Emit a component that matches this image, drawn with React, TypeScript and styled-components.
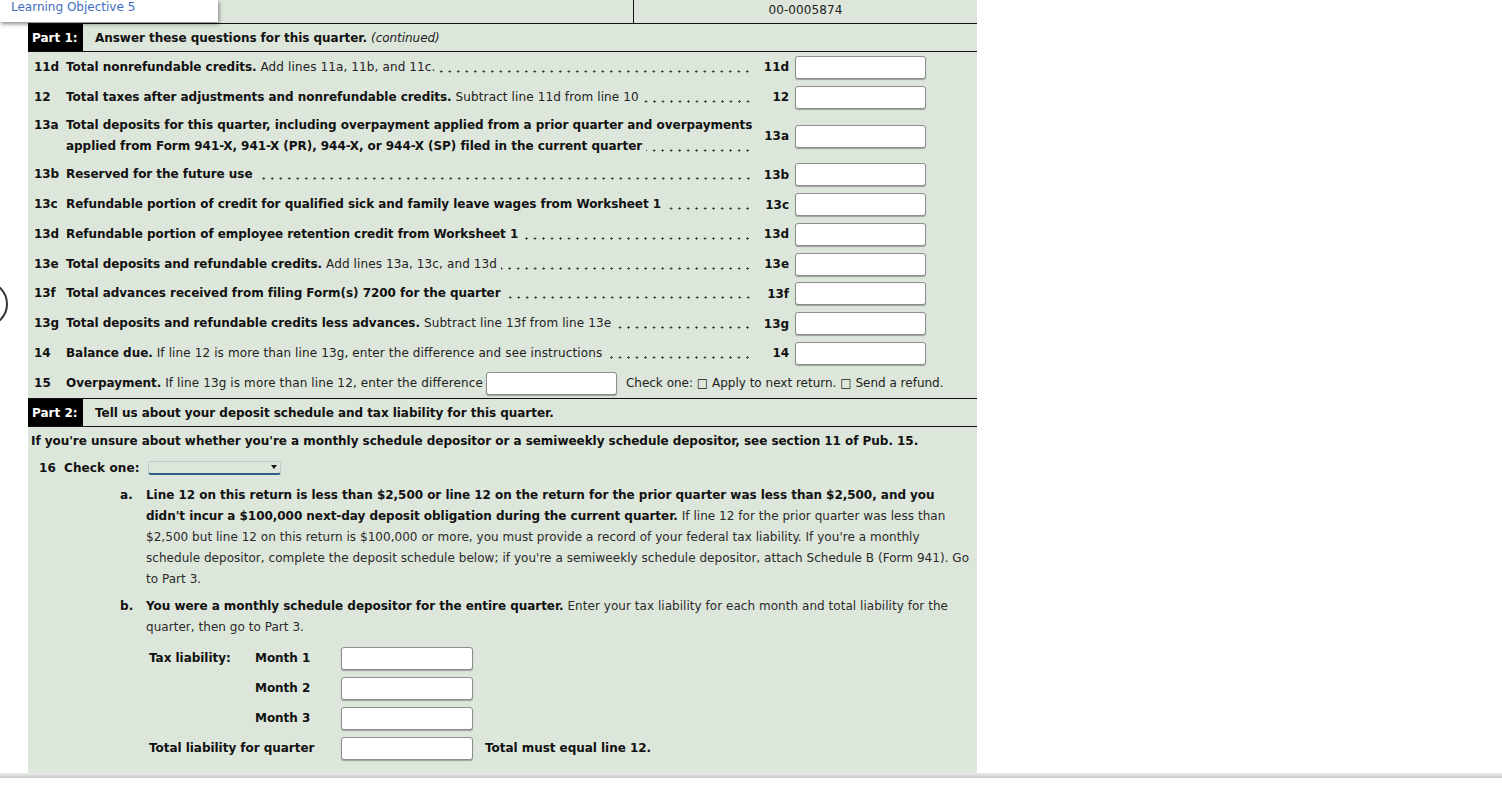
import React from "react";
import styled, { createGlobalStyle } from "styled-components";

const GlobalStyle = createGlobalStyle`
  html, body {
    margin: 0;
    padding: 0;
    background: #fff;
  }
  body {
    font-family: "DejaVu Sans", Verdana, sans-serif;
    font-size: 12px;
    letter-spacing: 0.12px;
    color: #222;
  }
`;

const Page = styled.div`
  position: relative;
  width: 1502px;
  height: 792px;
  overflow: hidden;
  background: #fff;
`;

const Panel = styled.div`
  width: 949px;
  height: 773px;
  margin-left: 28px;
  background: #dde6db;
  display: flex;
  flex-direction: column;
`;

const BottomBar = styled.div`
  height: 5px;
  background: linear-gradient(#ececec, #c8c8c8);
`;

const LearningTab = styled.div`
  position: absolute;
  top: 0;
  left: 0;
  width: 207px;
  height: 22px;
  padding-left: 11px;
  background: #fff;
  color: #3f6cc2;
  line-height: 14px;
  letter-spacing: 0;
  box-shadow: 1px 2px 4px rgba(0, 0, 0, 0.45);
  z-index: 2;
`;

const EdgeCircle = styled.div`
  position: absolute;
  left: -38px;
  top: 281px;
  width: 42px;
  height: 42px;
  border: 2px solid #333;
  border-radius: 50%;
`;

const TopRow = styled.div`
  display: grid;
  grid-template-columns: 605px 1fr;
  height: 23px;
  border-bottom: 1px solid #111;
`;

const IdCell = styled.div`
  grid-column: 2;
  border-left: 1px solid #111;
  text-align: center;
  line-height: 20px;
  color: #222;
`;

const PartHeader = styled.div<{ $top?: boolean }>`
  display: flex;
  align-items: stretch;
  height: 27px;
  border-bottom: 1px solid #111;
  border-top: ${(p) => (p.$top ? "1px solid #111" : "none")};
`;

const PartLabel = styled.div`
  width: 51px;
  padding-left: 4px;
  background: #000;
  color: #fff;
  font-weight: 700;
  letter-spacing: 0;
  display: flex;
  align-items: center;
`;

const PartTitle = styled.div`
  padding-left: 12px;
  font-weight: 700;
  letter-spacing: -0.04px;
  color: #111;
  display: flex;
  align-items: center;
  gap: 4px;
`;

const Continued = styled.span`
  font-weight: 400;
  font-style: italic;
  color: #222;
`;

const LineRow = styled.div<{ $h: number }>`
  display: grid;
  grid-template-columns: 32px 687px 36px 131px;
  align-items: center;
  height: ${(p) => p.$h}px;
  padding-left: 6px;
`;

const Num = styled.div<{ $pad?: number }>`
  font-weight: 700;
  letter-spacing: -0.04px;
  color: #111;
  align-self: ${(p) => (p.$pad === undefined ? "center" : "start")};
  line-height: 21px;
  padding-top: ${(p) => p.$pad ?? 0}px;
`;

const Desc = styled.div`
  display: flex;
  flex-direction: column;
  line-height: 21px;
  min-width: 0;
`;

const DescLine = styled.div`
  display: flex;
  white-space: nowrap;
  min-width: 0;
`;

const Strong = styled.span`
  font-weight: 700;
  letter-spacing: -0.04px;
  color: #111;
`;

const Leader = styled.span`
  flex: 1;
  min-width: 0;
  height: 21px;
  margin-left: 4px;
  background-image: radial-gradient(circle, #333 0.9px, transparent 1.3px);
  background-size: 8.5px 3px;
  background-repeat: repeat-x;
  background-position: right 1px bottom 5px;
`;

const LineNo = styled.div`
  text-align: right;
  font-weight: 700;
  letter-spacing: -0.04px;
  color: #111;
`;

const Field = styled.input<{ $w?: number }>`
  box-sizing: border-box;
  width: ${(p) => p.$w ?? 131}px;
  height: 23px;
  margin: 0;
  margin-left: 6px;
  border: 1px solid #8d8d8d;
  border-radius: 3px;
  background: #fff;
  box-shadow: 0 1px 1px rgba(0, 0, 0, 0.3);
  font: inherit;
`;

const InlineRow = styled.div`
  display: flex;
  align-items: center;
  height: 30px;
  padding-left: 6px;
  white-space: nowrap;
`;

const InlineNum = styled.span`
  width: 32px;
  font-weight: 700;
  color: #111;
`;

const InlineField = styled(Field)`
  margin-left: 3px;
  margin-right: 9px;
`;

const CheckText = styled.span`
  letter-spacing: 0;
`;

const Note = styled.div`
  height: 27px;
  display: flex;
  align-items: center;
  padding-left: 3px;
  font-weight: 700;
  letter-spacing: -0.04px;
  color: #111;
`;

const CheckRow = styled.div`
  height: 28px;
  display: flex;
  align-items: center;
  padding-left: 11px;
  font-weight: 700;
  color: #111;
`;

const CheckNum = styled.span`
  width: 25px;
`;

const Dropdown = styled.div`
  position: relative;
  box-sizing: border-box;
  width: 133px;
  height: 14px;
  margin-left: 8px;
  border: 1px solid #c4c8cc;
  border-bottom: 2px solid #2d5f8b;
  border-radius: 3px;
  background: #dde6db;
`;

const Caret = styled.span`
  position: absolute;
  right: 3px;
  top: 3px;
  width: 0;
  height: 0;
  border-left: 3px solid transparent;
  border-right: 3px solid transparent;
  border-top: 4px solid #111;
`;

const Option = styled.div<{ $mt: number }>`
  display: grid;
  grid-template-columns: 26px 1fr;
  margin-top: ${(p) => p.$mt}px;
  padding-left: 92px;
  line-height: 21px;
  letter-spacing: 0.04px;
  color: #2a2a2a;
  white-space: nowrap;
`;

const OptionMark = styled.span`
  font-weight: 700;
  color: #111;
`;

const Liability = styled.div`
  display: grid;
  grid-template-columns: 106px 86px 132px auto;
  grid-auto-rows: 30px;
  align-items: center;
  margin-top: 5px;
  padding-left: 121px;
  font-weight: 700;
  letter-spacing: -0.04px;
  color: #111;
`;

const Span2 = styled.span`
  grid-column: 1 / span 2;
`;

const MonthField = styled(Field)`
  margin-left: 0;
  width: 132px;
`;

const Hint = styled.span`
  padding-left: 12px;
`;

type Line = {
  num: string;
  bold: string;
  rest?: string;
  h: number;
};

const upper: Line[] = [
  { num: "11d", bold: "Total nonrefundable credits.", rest: " Add lines 11a, 11b, and 11c.", h: 30 },
  {
    num: "12",
    bold: "Total taxes after adjustments and nonrefundable credits.",
    rest: " Subtract line 11d from line 10",
    h: 30,
  },
];

const lower: Line[] = [
  { num: "13b", bold: "Reserved for the future use", h: 29.75 },
  {
    num: "13c",
    bold: "Refundable portion of credit for qualified sick and family leave wages from Worksheet 1",
    h: 29.75,
  },
  { num: "13d", bold: "Refundable portion of employee retention credit from Worksheet 1", h: 29.75 },
  {
    num: "13e",
    bold: "Total deposits and refundable credits.",
    rest: " Add lines 13a, 13c, and 13d",
    h: 29.75,
  },
  { num: "13f", bold: "Total advances received from filing Form(s) 7200 for the quarter", h: 29.75 },
  {
    num: "13g",
    bold: "Total deposits and refundable credits less advances.",
    rest: " Subtract line 13f from line 13e",
    h: 29.75,
  },
  {
    num: "14",
    bold: "Balance due.",
    rest: " If line 12 is more than line 13g, enter the difference and see instructions",
    h: 29.75,
  },
];

const Row: React.FC<{ line: Line }> = ({ line }) => (
  <LineRow $h={line.h}>
    <Num>{line.num}</Num>
    <Desc>
      <DescLine>
        <span>
          <Strong>{line.bold}</Strong>
          {line.rest}
        </span>
        <Leader />
      </DescLine>
    </Desc>
    <LineNo>{line.num}</LineNo>
    <Field />
  </LineRow>
);

const App: React.FC = () => {
  return (
    <Page>
      <GlobalStyle />
      <LearningTab>Learning Objective 5</LearningTab>
      <EdgeCircle />
      <Panel>
        <TopRow>
          <IdCell>00-0005874</IdCell>
        </TopRow>
        <PartHeader>
          <PartLabel>Part 1:</PartLabel>
          <PartTitle>
            Answer these questions for this quarter. <Continued>(continued)</Continued>
          </PartTitle>
        </PartHeader>

        {upper.map((l) => (
          <Row key={l.num} line={l} />
        ))}

        <LineRow $h={48}>
          <Num $pad={3}>13a</Num>
          <Desc>
            <DescLine>
              <Strong>
                Total deposits for this quarter, including overpayment applied from a prior quarter and overpayments
              </Strong>
            </DescLine>
            <DescLine>
              <Strong>applied from Form 941-X, 941-X (PR), 944-X, or 944-X (SP) filed in the current quarter</Strong>
              <Leader />
            </DescLine>
          </Desc>
          <LineNo>13a</LineNo>
          <Field />
        </LineRow>

        {lower.map((l) => (
          <Row key={l.num} line={l} />
        ))}

        <InlineRow>
          <InlineNum>15</InlineNum>
          <Strong>Overpayment.</Strong>&nbsp;If line 13g is more than line 12, enter the difference
          <InlineField />
          <CheckText>Check one: &#9633; Apply to next return. &#9633; Send a refund.</CheckText>
        </InlineRow>

        <PartHeader $top>
          <PartLabel>Part 2:</PartLabel>
          <PartTitle>Tell us about your deposit schedule and tax liability for this quarter.</PartTitle>
        </PartHeader>

        <Note>
          If you're unsure about whether you're a monthly schedule depositor or a semiweekly schedule depositor, see
          section 11 of Pub. 15.
        </Note>

        <CheckRow>
          <CheckNum>16</CheckNum>
          Check one:
          <Dropdown>
            <Caret />
          </Dropdown>
        </CheckRow>

        <Option $mt={3}>
          <OptionMark>a.</OptionMark>
          <div>
            <Strong>
              Line 12 on this return is less than $2,500 or line 12 on the return for the prior quarter was less than
              $2,500, and you
              <br />
              didn't incur a $100,000 next-day deposit obligation during the current quarter.
            </Strong>{" "}
            If line 12 for the prior quarter was less than
            <br />
            $2,500 but line 12 on this return is $100,000 or more, you must provide a record of your federal tax
            liability. If you're a monthly
            <br />
            schedule depositor, complete the deposit schedule below; if you're a semiweekly schedule depositor, attach
            Schedule B (Form 941). Go
            <br />
            to Part 3.
          </div>
        </Option>

        <Option $mt={6}>
          <OptionMark>b.</OptionMark>
          <div>
            <Strong>You were a monthly schedule depositor for the entire quarter.</Strong> Enter your tax liability for
            each month and total liability for the
            <br />
            quarter, then go to Part 3.
          </div>
        </Option>

        <Liability>
          <span>Tax liability:</span>
          <span>Month 1</span>
          <MonthField />
          <span />
          <span />
          <span>Month 2</span>
          <MonthField />
          <span />
          <span />
          <span>Month 3</span>
          <MonthField />
          <span />
          <Span2>Total liability for quarter</Span2>
          <MonthField />
          <Hint>Total must equal line 12.</Hint>
        </Liability>
      </Panel>
      <BottomBar />
    </Page>
  );
};

export default App;
